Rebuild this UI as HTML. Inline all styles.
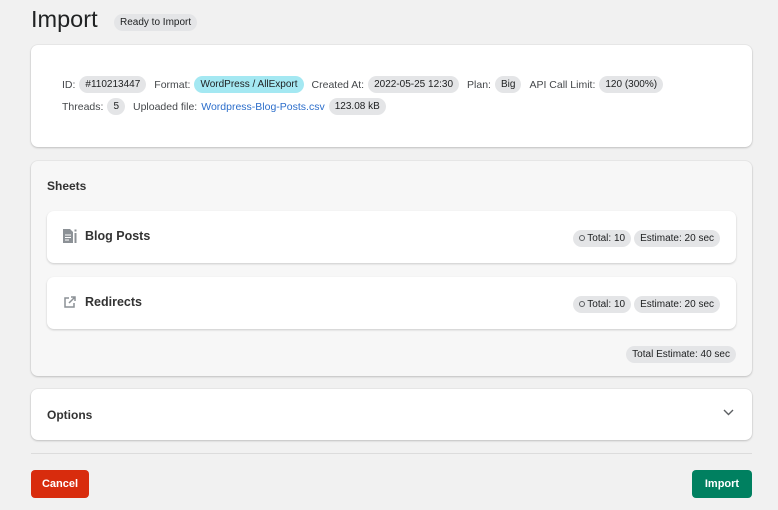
<!DOCTYPE html>
<html><head><style>
*{box-sizing:border-box;margin:0;padding:0}
body{width:778px;height:510px;background:#f1f1f1;font-family:"Liberation Sans",sans-serif;color:#202223;position:relative;overflow:hidden;font-size:11px}
.abs{position:absolute}
.card{position:absolute;left:31px;width:721px;background:#fff;border-radius:7px;box-shadow:0 1px 2px rgba(0,0,0,.18),0 0 0 1px rgba(0,0,0,.03)}
.tag{display:inline-block;background:#e4e5e7;border-radius:9px;padding:2px 6px;font-size:10px;line-height:13px;color:#202223}
.lbl{color:#44474a;font-size:10.5px}
.row{position:absolute;left:31px;display:flex;align-items:center;gap:4px;white-space:nowrap}
.row .lbl{margin-left:4px}
.row .lbl:first-child{margin-left:0}
.sub{position:absolute;left:16px;width:689px;height:52px;background:#fff;border-radius:7px;box-shadow:0 1px 2px rgba(0,0,0,.18)}
.sub .t{position:absolute;left:38px;top:18px;font-size:12.5px;font-weight:bold;color:#333}
.sub .r{position:absolute;right:16px;top:19px;display:flex;gap:3px}
.ring{display:inline-block;width:6px;height:6px;border:1.5px solid #5c5f62;border-radius:50%;margin-right:2px;vertical-align:0}
</style></head><body>
<div class="abs" style="left:31px;top:6px;font-size:23.5px;color:#202223">Import</div>
<div class="abs tag" style="left:114px;top:14px">Ready to Import</div>

<div class="card" style="top:45px;height:102px">
 <div class="row" style="top:31px"><span class="lbl">ID:</span><span class="tag">#110213447</span><span class="lbl">Format:</span><span class="tag" style="background:#a4e8f2">WordPress / AllExport</span><span class="lbl">Created At:</span><span class="tag">2022-05-25 12:30</span><span class="lbl">Plan:</span><span class="tag">Big</span><span class="lbl">API Call Limit:</span><span class="tag">120 (300%)</span></div>
 <div class="row" style="top:53px"><span class="lbl">Threads:</span><span class="tag">5</span><span class="lbl">Uploaded file:</span><span style="color:#2c6ecb;font-size:10.5px">Wordpress-Blog-Posts.csv</span><span class="tag">123.08 kB</span></div>
</div>

<div class="card" style="top:161px;height:215px;background:#f7f7f7">
 <div class="abs" style="left:16px;top:18px;font-size:12px;font-weight:bold;color:#333">Sheets</div>
 <div class="sub" style="top:50px">
  <svg class="abs" style="left:16px;top:18px" width="14" height="14" viewBox="0 0 14 14"><path d="M0 0h7l3 3v11H0z" fill="#8c9196"/><path d="M2 6h6M2 8.5h6M2 11h4" stroke="#fff" stroke-width="1"/><rect x="11.5" y="4" width="2" height="10" fill="#8c9196"/><rect x="11.5" y="0.5" width="2" height="2" fill="#8c9196"/></svg>
  <div class="t">Blog Posts</div>
  <div class="r"><span class="tag"><span class="ring"></span>Total: 10</span><span class="tag">Estimate: 20 sec</span></div>
 </div>
 <div class="sub" style="top:116px">
  <svg class="abs" style="left:17px;top:19px" width="12" height="12" viewBox="0 0 12 12" fill="none" stroke="#8c9196" stroke-width="1.5"><path d="M5 2H1v9h9V7"/><path d="M7 1h4v4M11 1 5 7"/></svg>
  <div class="t">Redirects</div>
  <div class="r"><span class="tag"><span class="ring"></span>Total: 10</span><span class="tag">Estimate: 20 sec</span></div>
 </div>
 <div class="abs tag" style="right:16px;top:185px">Total Estimate: 40 sec</div>
</div>

<div class="card" style="top:389px;height:51px">
 <div class="abs" style="left:16px;top:19px;font-size:12px;font-weight:bold;color:#333">Options</div>
 <svg class="abs" style="right:18px;top:20px" width="11" height="7" viewBox="0 0 11 7" fill="none" stroke="#5c5f62" stroke-width="1.4"><path d="M1 1l4.5 4.5L10 1"/></svg>
</div>
<div class="abs" style="left:31px;top:453px;width:721px;height:1px;background:#dcdcdc"></div>
<div class="abs" style="left:31px;top:470px;width:58px;height:28px;background:#d82c0d;border-radius:4px;color:#fff;font-weight:bold;font-size:11px;text-align:center;line-height:28px">Cancel</div>
<div class="abs" style="left:692px;top:470px;width:60px;height:28px;background:#008060;border-radius:4px;color:#fff;font-weight:bold;font-size:11px;text-align:center;line-height:28px">Import</div>
</body></html>
